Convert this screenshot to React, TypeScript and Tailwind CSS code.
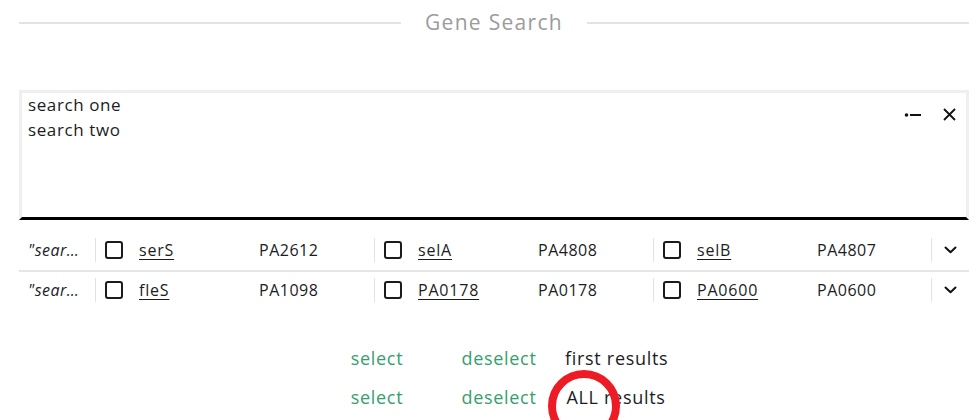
import React from "react";

const rows = [
  {
    q: "\"sear…",
    items: [
      { name: "serS", code: "PA2612" },
      { name: "selA", code: "PA4808" },
      { name: "selB", code: "PA4807" },
    ],
  },
  {
    q: "\"sear…",
    items: [
      { name: "fleS", code: "PA1098" },
      { name: "PA0178", code: "PA0178" },
      { name: "PA0600", code: "PA0600" },
    ],
  },
];

function Chevron() {
  return (
    <svg width="13" height="8" viewBox="0 0 13 8" fill="none">
      <path d="M1.5 1.5 L6.5 6.2 L11.5 1.5" stroke="#111" strokeWidth="2" strokeLinecap="round" strokeLinejoin="round" />
    </svg>
  );
}

function Group({ name, code, w }: { name: string; code: string; w: string }) {
  return (
    <div className={`flex items-center ${w}`}>
      <div className="w-px h-[24px] bg-[#e2e2e2]" />
      <div className="ml-[9px] w-[18px] h-[18px] rounded-[3px] border-2 border-[#1b1b1b] shrink-0" />
      <div className="ml-[16px] w-[120px] underline underline-offset-[3px] decoration-1 tracking-[0.8px]">{name}</div>
      <div>{code}</div>
    </div>
  );
}

export default function App() {
  return (
    <div className="relative w-[979px] h-[420px] overflow-hidden bg-white text-[#1c1c24] font-['Open_Sans',sans-serif] text-[16px] tracking-[0.5px]">
      <div className="ml-[19px] w-[950px]">
        <div className="h-[45px] flex items-center gap-[24px]">
          <div className="flex-1 h-[2px] bg-[#e3e3e3]" />
          <div className="text-[21px] text-[#9b9b9b] tracking-[1.3px]">Gene Search</div>
          <div className="flex-1 h-[2px] bg-[#e3e3e3]" />
        </div>

        <div className="mt-[45px] relative h-[130px] border-[3px] border-[#efefef] border-b-black pl-[6px]">
          <div className="leading-[25px] -mt-[1px] text-[17px] tracking-[0.6px]">
            <div>search one</div>
            <div>search two</div>
          </div>
          <div className="absolute top-[15px] right-[10px] flex items-center gap-[22px]">
            <svg width="17" height="6" viewBox="0 0 17 6">
              <circle cx="2.5" cy="3" r="1.8" fill="#111" />
              <rect x="6" y="2" width="11" height="2" fill="#111" />
            </svg>
            <svg width="13" height="13" viewBox="0 0 13 13">
              <path d="M1 1 L12 12 M12 1 L1 12" stroke="#111" strokeWidth="1.8" />
            </svg>
          </div>
        </div>

        <div className="mt-[10px]">
          {rows.map((r, i) => (
            <div
              key={i}
              className={`flex items-center ${i === 0 ? "h-[42px] border-b-2 border-[#e6e6e6]" : "h-[36px]"}`}
            >
              <div className="w-[76px] pl-[9px] italic whitespace-nowrap">{r.q}</div>
              <Group name={r.items[0].name} code={r.items[0].code} w="w-[279px]" />
              <Group name={r.items[1].name} code={r.items[1].code} w="w-[279px]" />
              <Group name={r.items[2].name} code={r.items[2].code} w="w-[278px]" />
              <div className="flex-1 flex items-center h-full">
                <div className="w-px h-[24px] bg-[#e2e2e2]" />
                <div className="flex-1 flex justify-center">
                  <Chevron />
                </div>
              </div>
            </div>
          ))}
        </div>
      </div>

      <div className="mt-[31px] ml-[321px] leading-[39px] text-[18px] tracking-[0.7px]">
        <div className="flex">
          <div className="w-[112px] text-center text-[#34a06d]">select</div>
          <div className="w-[132px] text-center text-[#34a06d]">deselect</div>
          <div className="w-[102px] text-center whitespace-nowrap">first results</div>
        </div>
        <div className="flex">
          <div className="w-[112px] text-center text-[#34a06d]">select</div>
          <div className="w-[132px] text-center text-[#34a06d]">deselect</div>
          <div className="w-[102px] text-center whitespace-nowrap">ALL results</div>
        </div>
      </div>

      <svg className="absolute left-[544px] top-[366px]" width="80" height="80" viewBox="0 0 80 80">
        <circle cx="40" cy="40" r="32" fill="none" stroke="#ed1c24" strokeWidth="8" />
      </svg>
    </div>
  );
}
